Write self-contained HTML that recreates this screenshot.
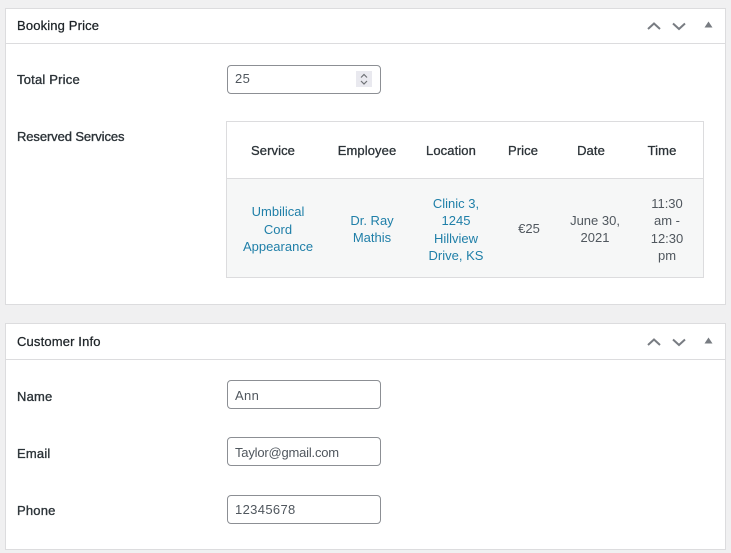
<!DOCTYPE html>
<html>
<head>
<meta charset="utf-8">
<style>
html,body{margin:0;padding:0;width:731px;height:553px;overflow:hidden;background:#f0f0f1}
body{position:relative;font-family:"Liberation Sans",sans-serif;font-size:13px;color:#3c434a}
#w{position:absolute;left:0;top:0;width:731px;height:553px;filter:blur(.3px)}
.a{position:absolute}
.box{position:absolute;left:5px;width:719px;background:#fff;border:1px solid #dcdcde}
.line{position:absolute;height:1px;background:#dcdcde}
.h{position:absolute;left:17px;font-size:13px;color:#1d2327;line-height:18px;-webkit-text-stroke:.25px #1d2327;letter-spacing:.15px}
.l{position:absolute;left:17px;font-size:13px;color:#2c3338;line-height:18px;-webkit-text-stroke:.35px #2c3338;letter-spacing:.2px}
.in{position:absolute;left:227px;width:152px;height:27px;background:#fff;border:1px solid #8c8f94;border-radius:4px}
.v{position:absolute;left:235px;font-size:13px;line-height:18px;color:#50575e;letter-spacing:.35px}
.th,.td{position:absolute;text-align:center;line-height:17.5px;font-size:13px}
.th{color:#2c3338;-webkit-text-stroke:.3px #2c3338;letter-spacing:.1px}
.td{color:#50575e;letter-spacing:0}
.lk{color:#1f7fa8}
svg{position:absolute;overflow:visible}
</style>
</head>
<body>
<div id="w">
<div class="box" style="top:8px;height:295px"></div>
<div class="line" style="left:6px;width:719px;top:43px"></div>
<div class="h" style="top:17px">Booking Price</div>

<div class="l" style="top:71px">Total Price</div>
<div class="in" style="top:65px"></div>
<div class="v" style="top:70px">25</div>
<div class="a" style="left:356px;top:71px;width:16px;height:16px;background:#e9e9ef"></div>
<svg style="left:356px;top:71px" width="16" height="16">
<g fill="none" stroke="#6f7276" stroke-width="1.200">
<path d="M5 6.500L8 3.500L11 6.500"/>
<path d="M5 10L8 13L11 10"/>
</g>
</svg>

<div class="l" style="top:128px;letter-spacing:-.1px">Reserved Services</div>

<div class="a" style="left:226px;top:121px;width:476px;height:155px;background:#fff;border:1px solid #dcdcde"></div>
<div class="a" style="left:227px;top:179px;width:476px;height:98px;background:#f6f7f7"></div>
<div class="line" style="left:227px;width:476px;top:178px"></div>

<div class="th" style="left:233px;width:80px;top:142px">Service</div>
<div class="th" style="left:327px;width:80px;top:142px">Employee</div>
<div class="th" style="left:411px;width:80px;top:142px">Location</div>
<div class="th" style="left:483px;width:80px;top:142px">Price</div>
<div class="th" style="left:551px;width:80px;top:142px">Date</div>
<div class="th" style="left:622px;width:80px;top:142px">Time</div>

<div class="td lk" style="left:238px;width:80px;top:203px">Umbilical<br>Cord<br>Appearance</div>
<div class="td lk" style="left:332px;width:80px;top:211.500px">Dr. Ray<br>Mathis</div>
<div class="td lk" style="left:416px;width:80px;top:194.500px">Clinic 3,<br>1245<br>Hillview<br>Drive, KS</div>
<div class="td" style="left:489px;width:80px;top:220px">€25</div>
<div class="td" style="left:555px;width:80px;top:211.500px">June 30,<br>2021</div>
<div class="td" style="left:627px;width:80px;top:194.500px">11:30<br>am -<br>12:30<br>pm</div>

<div class="box" style="top:323px;height:225px"></div>
<div class="line" style="left:6px;width:719px;top:359px"></div>
<div class="h" style="top:333px">Customer Info</div>

<div class="l" style="top:388px">Name</div>
<div class="in" style="top:380px"></div>
<div class="v" style="top:387px">Ann</div>

<div class="l" style="top:445px">Email</div>
<div class="in" style="top:437px"></div>
<div class="v" style="top:444px;letter-spacing:-.2px">Taylor@gmail.com</div>

<div class="l" style="top:502px">Phone</div>
<div class="in" style="top:495px"></div>
<div class="v" style="top:501px">12345678</div>

<svg style="left:0;top:0" width="731" height="553">
<g fill="none" stroke="#787c82" stroke-width="2">
<path d="M648 29L654 23.500L660 29"/>
<path d="M673 23.500L679 29L685 23.500"/>
<path d="M648 345L654 339.500L660 345"/>
<path d="M673 339.500L679 345L685 339.500"/>
</g>
<path d="M704.500 27.500L708.500 21.500L712.500 27.500Z" fill="#787c82"/>
<path d="M704.500 343.500L708.500 337.500L712.500 343.500Z" fill="#787c82"/>
</svg>
</div>
</body>
</html>
